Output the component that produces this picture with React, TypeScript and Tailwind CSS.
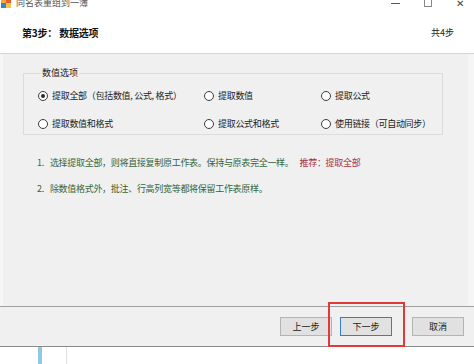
import React from 'react'

const options = [
  { label: '提取全部（包括数值, 公式, 格式）', checked: true },
  { label: '提取数值', checked: false },
  { label: '提取公式', checked: false },
  { label: '提取数值和格式', checked: false },
  { label: '提取公式和格式', checked: false },
  { label: '使用链接（可自动同步）', checked: false },
]

function Radio({ checked }: { checked: boolean }) {
  return (
    <span className="w-[10px] h-[10px] rounded-full border border-[#3c3c3c] bg-white flex items-center justify-center shrink-0">
      {checked && <span className="w-[4px] h-[4px] rounded-full bg-[#2a2a2a]" />}
    </span>
  )
}

function Btn({ label, primary }: { label: string; primary?: boolean }) {
  return (
    <button
      className={
        'w-[52px] h-[19px] text-[9px] text-[#222] bg-[#e1e1e1] flex items-center justify-center border ' +
        (primary ? 'border-[#2f7fd1]' : 'border-[#b4b4b4]')
      }
    >
      {label}
    </button>
  )
}

export default function App() {
  return (
    <div className="w-[474px] h-[364px] overflow-hidden bg-white flex flex-col font-['Noto_Sans_CJK_SC',sans-serif]">
      {/* Title bar, cut off at the top */}
      <div className="h-[8px] overflow-hidden flex items-end shrink-0">
        <div className="flex items-center gap-[5px] pl-[1px] mb-[-1px]">
          <span className="w-[10px] h-[9px] flex flex-wrap">
            <span className="w-[5px] h-[4px] bg-[#f2a93b]" />
            <span className="w-[5px] h-[4px] bg-[#e65c2e]" />
            <span className="w-[5px] h-[5px] bg-[#3d7fd4]" />
            <span className="w-[5px] h-[5px] bg-[#f4c542]" />
          </span>
          <span className="text-[9px] leading-[12px] text-[#555]">同名表重组到一簿</span>
        </div>
        <div className="ml-auto flex items-end gap-[24px] pr-[10px] mb-[1px] text-[#444]">
          <span className="w-[9px] h-px bg-[#555] mb-[3px]" />
          <span className="w-[8px] h-[7px] border border-[#888] border-t-0" />
          <span className="text-[10px] leading-[10px] mb-[-1px]">✕</span>
        </div>
      </div>

      {/* Header */}
      <div className="h-[46px] shrink-0 flex items-center justify-between pl-[22px] pr-[20px] pt-[4px] border-b border-[#d4d4d4]">
        <span className="text-[10px] font-bold text-[#111] tracking-[-0.2px]">第3步：&nbsp;数据选项</span>
        <span className="text-[9px] text-[#222]">共4步</span>
      </div>

      {/* Content */}
      <div className="h-[252px] shrink-0 bg-[#f0f0f0] border-l-[3px] border-r-[6px] border-[#f6f6f6] pl-[20px] pr-[25px] pt-[13px]">
        <fieldset className="border border-[#dcdcdc] h-[68px] pl-[14px] pr-[8px] pt-[11px]">
          <legend className="text-[9px] text-[#222] ml-[3px] px-[1px] leading-[12px]">数值选项</legend>
          <div className="grid grid-cols-[166px_117px_1fr] gap-y-[16px] text-[9px] leading-[12px] text-[#1a1a1a] tracking-[-0.3px]">
            {options.map((o) => (
              <label key={o.label} className="flex items-center gap-[4px]">
                <Radio checked={o.checked} />
                <span>{o.label}</span>
              </label>
            ))}
          </div>
        </fieldset>

        <div className="pl-[14px] pt-[22px] flex flex-col gap-[14px] text-[9px] leading-[12px] text-[#35653a] tracking-[-0.3px]">
          <p className="flex gap-[6px]">
            <span>1.</span>
            <span>
              选择提取全部，则将直接复制原工作表。保持与原表完全一样。
              <span className="ml-[6px] text-[#a8303e]">推荐：提取全部</span>
            </span>
          </p>
          <p className="flex gap-[6px]">
            <span>2.</span>
            <span>除数值格式外，批注、行高列宽等都将保留工作表原样。</span>
          </p>
        </div>
      </div>

      {/* Footer */}
      <div className="h-[40px] shrink-0 bg-[#f0f0f0] border-t border-[#a0a0a0] flex items-center pl-[280px] gap-[8px]">
        <Btn label="上一步" />
        <div className="relative">
          <Btn label="下一步" primary />
          <div className="absolute left-[-12px] top-[-15px] w-[77px] h-[45px] border-2 border-[#e0393b]" />
        </div>
        <div className="ml-[12px]">
          <Btn label="取消" />
        </div>
      </div>

      {/* Window below */}
      <div className="flex-1 bg-white border-t border-[#8a8a8a] flex">
        <span className="ml-[38px] w-[4px] bg-[#8ec9e6]" />
        <span className="ml-[24px] w-px bg-[#e2e2e2]" />
      </div>
    </div>
  )
}
